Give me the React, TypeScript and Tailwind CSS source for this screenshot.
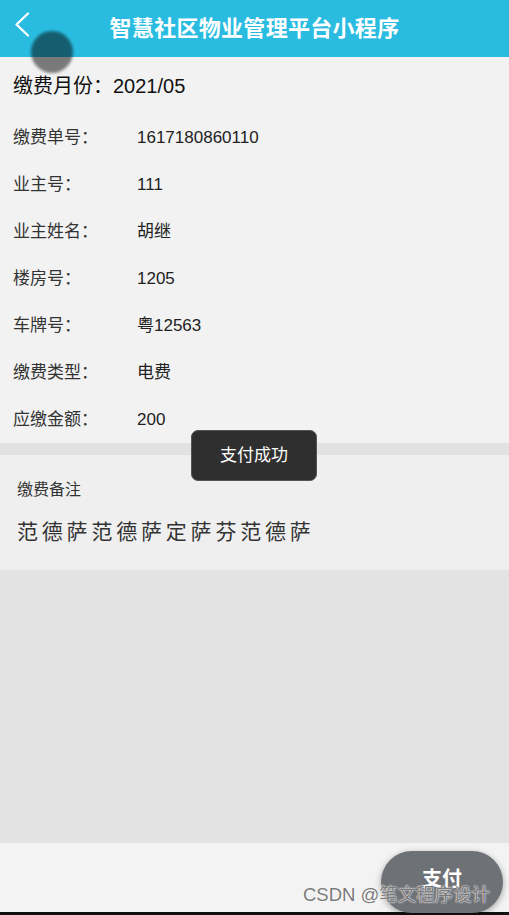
import React from 'react'

const rows: [string, string][] = [
  ['缴费单号：', '1617180860110'],
  ['业主号：', '111'],
  ['业主姓名：', '胡继'],
  ['楼房号：', '1205'],
  ['车牌号：', '粤12563'],
  ['缴费类型：', '电费'],
  ['应缴金额：', '200'],
]

const font = { fontFamily: '"Liberation Sans", "Noto Sans CJK SC", sans-serif' }

export default function App() {
  return (
    <div className="relative flex h-[915px] w-[509px] flex-col overflow-hidden bg-[#f2f2f2]" style={font}>
      {/* header */}
      <div className="relative flex h-[57px] shrink-0 items-center justify-center bg-[#29bce0]">
        <svg className="absolute left-[13px] top-[11px]" width="20" height="28" viewBox="0 0 20 28">
          <path d="M15 2.5 L3.5 13.5 L15 24.5" fill="none" stroke="white" strokeWidth="2.3" strokeLinecap="round" strokeLinejoin="round" />
        </svg>
        <span className="text-[22px] font-bold tracking-[0.3px] text-white">智慧社区物业管理平台小程序</span>
      </div>

      {/* details */}
      <div className="shrink-0 bg-[#f2f2f2] pl-[13px]">
        <div className="flex h-[57px] items-center text-[20px] text-[#111]">缴费月份：2021/05</div>
        {rows.map(([label, value]) => (
          <div key={label} className="flex h-[47px] items-center text-[17px]">
            <span className="w-[124px] text-[#333]">{label}</span>
            <span className="text-[#222]">{value}</span>
          </div>
        ))}
      </div>

      <div className="h-[12px] shrink-0 bg-[#e2e2e2]" />

      {/* remark */}
      <div className="flex h-[115px] shrink-0 flex-col bg-[#efefef] pl-[17px]">
        <div className="mt-[23px] text-[16px] leading-[24px] text-[#333]">缴费备注</div>
        <div className="mt-[15px] text-[21px] leading-[30px] tracking-[3.8px] text-[#333]">范德萨范德萨定萨芬范德萨</div>
      </div>

      <div className="flex-1 bg-[#e3e3e3]" />

      {/* bottom bar */}
      <div className="h-[69px] shrink-0 bg-[#f3f3f3]" />
      <div className="h-[3px] shrink-0 bg-[#111]" />

      {/* pay button */}
      <div className="absolute left-[381px] top-[851px] flex h-[62px] w-[122px] items-center justify-center rounded-full bg-[#6e7176] pb-[6px] shadow-[0_2px_6px_rgba(0,0,0,0.35)]">
        <span className="text-[20px] font-bold text-white">支付</span>
      </div>

      {/* watermark */}
      <div className="absolute left-[303px] top-[883px] text-[18.5px] leading-[24px] text-[#7a7a7a] [text-shadow:0_0_2px_#fff,0_0_1px_#fff]">
        CSDN @笔文程序设计
      </div>

      {/* toast */}
      <div className="absolute left-[191px] top-[430px] flex h-[51px] w-[126px] items-center justify-center rounded-[7px] border border-[#555] bg-[#2f2f2f]">
        <span className="text-[17px] text-white">支付成功</span>
      </div>

      {/* touch indicator */}
      <div className="absolute left-[31px] top-[31px] h-[42px] w-[42px] rounded-full bg-black/50 blur-[1.5px]" />
    </div>
  )
}
